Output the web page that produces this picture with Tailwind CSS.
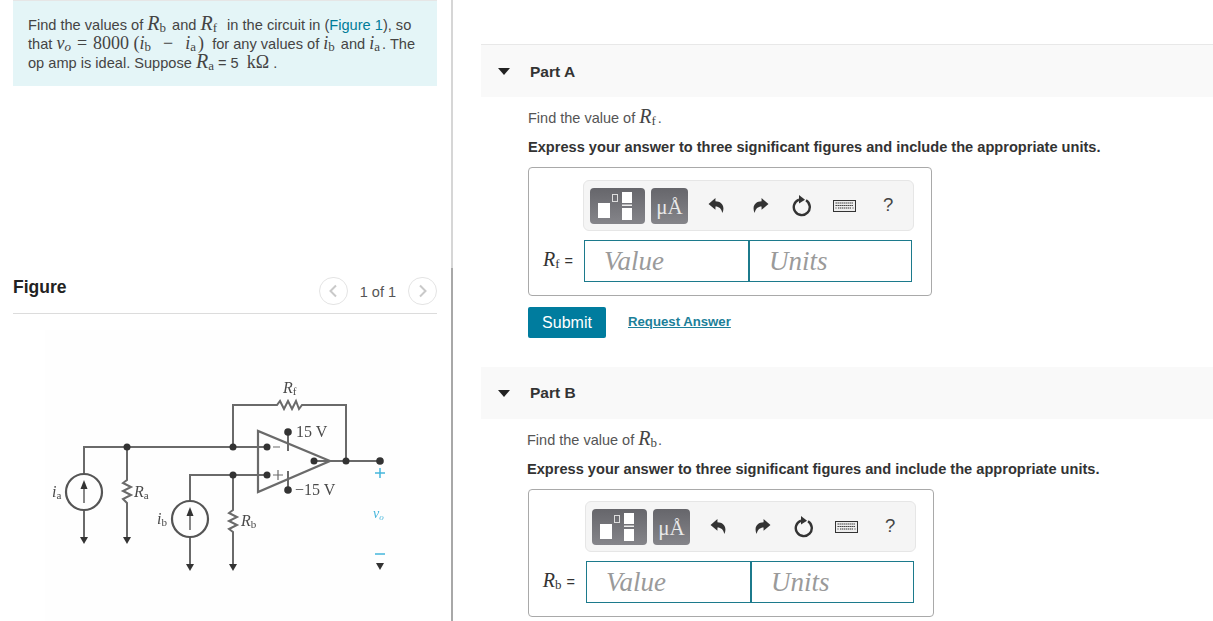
<!DOCTYPE html>
<html lang="en">
<head>
<meta charset="utf-8">
<script src="https://cdn.jsdelivr.net/npm/@tailwindcss/browser@4"></script>
<title>Circuit problem</title>
</head>
<body class="bg-white">
<div class="flex w-[1213px] h-[621px] overflow-hidden bg-white font-['Liberation_Sans',sans-serif] text-[#333]">

  <div class="w-[451px] shrink-0 pl-[13px] pr-[14px] flex flex-col">
    <div class="h-[87px] bg-[#e4f5f7] border-t border-[#e6e6e6] pl-[15px] pt-[15px] text-[14.6px] leading-[19px] text-[#444] whitespace-nowrap">
      <div class="h-[19px]">Find the values of <span class="font-['Liberation_Serif',serif] italic text-[20px] leading-[0]">R<span class="not-italic text-[13px] align-[-2px] leading-[0] mr-[2px]">b</span></span> and <span class="font-['Liberation_Serif',serif] italic text-[20px] leading-[0]">R<span class="not-italic text-[13px] align-[-2px] leading-[0] mr-[2px]">f</span></span> &nbsp;in the circuit in (<span class="text-[#007c99]">Figure 1</span>), so</div>
      <div class="h-[19px]">that <span class="font-['Liberation_Serif',serif] text-[18px] leading-[0]"><i>v<span class="text-[13px] align-[-2px] leading-[0]">o</span></i><span class="mx-[6px]">=</span>8000 (<i>i<span class="not-italic text-[13px] align-[-2px] leading-[0]">b</span></i><span class="mx-[12px]">−</span><i>i<span class="not-italic text-[13px] align-[-2px] leading-[0]">a</span></i><span class="ml-[2px]">)</span></span> &nbsp;for any values of <span class="font-['Liberation_Serif',serif] italic text-[18px] leading-[0]">i<span class="not-italic text-[13px] align-[-2px] leading-[0] mr-[2px]">b</span></span> and <span class="font-['Liberation_Serif',serif] italic text-[18px] leading-[0]">i<span class="not-italic text-[13px] align-[-2px] leading-[0] mr-[2px]">a</span></span>. The</div>
      <div class="h-[19px]">op amp is ideal. Suppose <span class="font-['Liberation_Serif',serif] italic text-[20px] leading-[0]">R<span class="not-italic text-[13px] align-[-2px] leading-[0]">a</span></span> = 5 &nbsp;<span class="font-['Liberation_Serif',serif] text-[18px] leading-[0]">kΩ</span> .</div>
    </div>

    <div class="mt-[190px] h-[37px] flex items-start justify-between border-b border-[#dcdcdc] box-content">
      <div class="text-[17.5px] leading-[22px] font-bold text-[#222]">Figure</div>
      <div class="flex items-center gap-[12px] mt-[1px]">
        <div class="w-[29px] h-[28px] rounded-full border border-[#e4e4e4] flex items-center justify-center">
          <svg width="10" height="14" viewBox="0 0 10 14" fill="none" stroke="#c9c9c9" stroke-width="2"><path d="M8 1.5 L2.5 7 L8 12.5"/></svg>
        </div>
        <div class="text-[14.5px] text-[#555] pt-[3px]">1 of 1</div>
        <div class="w-[29px] h-[28px] rounded-full border border-[#e4e4e4] flex items-center justify-center">
          <svg width="10" height="14" viewBox="0 0 10 14" fill="none" stroke="#c9c9c9" stroke-width="2"><path d="M2 1.5 L7.5 7 L2 12.5"/></svg>
        </div>
      </div>
    </div>

    <div class="mt-[16px] ml-[32px] w-[355px] h-[291px] bg-[#fefefe]">
      <svg width="355" height="291" viewBox="45 330 355 291" class="block blur-[0.35px]" font-family="Liberation Serif, serif" fill="#4a4a4a">
        <g fill="none" stroke="#6a6a6a" stroke-width="2">
          <path d="M84 538 V510 M84 474 V447 H267"/>
          <path d="M127 447 V480 L123 483 L131 487 L123 491 L131 495 L123 499 L127 503 V538"/>
          <path d="M190 565 V537 M190 501 V475 H267"/>
          <path d="M233 475 V510 L229 513 L237 517 L229 521 L237 525 L229 529 L233 532 V565"/>
          <path d="M233 447 V405 H277 L280 401 L284 409 L288 401 L292 409 L296 401 L299 409 L302 405 H346 V461"/>
          <path d="M314 461 H380"/>
          <path d="M288 432 V451 M288 471 V490"/>
          <path d="M258 431 V492 L330 461 Z" stroke-width="2.2"/>
          <circle cx="84" cy="492" r="18" stroke="#555" stroke-width="2.2"/>
          <circle cx="190" cy="519" r="18" stroke="#555" stroke-width="2.2"/>
          <path d="M84 503 V486 M190 530 V513" stroke-width="1.6"/>
          <path d="M273 475 H283 M278 470 V480 M273 447 H280" stroke-width="1.2"/>
        </g>
        <g fill="#333">
          <path d="M84 480 L80.5 489 H87.5 Z"/><path d="M190 507 L186.5 516 H193.5 Z"/>
          <path d="M80 537 H88 L84 544 Z"/><path d="M123 537 H131 L127 544 Z"/><path d="M186 564 H194 L190 571 Z"/><path d="M229 564 H237 L233 571 Z"/><path d="M376 563 H384 L380 570 Z"/>
          <circle cx="127" cy="447" r="3.5"/><circle cx="233" cy="447" r="3.5"/><circle cx="233" cy="475" r="3.5"/><circle cx="267" cy="447" r="3.5"/><circle cx="267" cy="475" r="3.5"/><circle cx="314" cy="461" r="3.5"/><circle cx="346" cy="461" r="3.5"/><circle cx="380" cy="461" r="3.8"/><circle cx="288" cy="432" r="3.8"/><circle cx="288" cy="490" r="3.8"/>
        </g>
        <g font-size="16">
          <text x="52" y="497" font-style="italic">i<tspan font-size="11" font-style="normal" dy="2">a</tspan></text>
          <text x="157" y="524" font-style="italic">i<tspan font-size="11" font-style="normal" dy="2">b</tspan></text>
          <text x="134" y="497" font-style="italic">R<tspan font-size="11" font-style="normal" dy="2">a</tspan></text>
          <text x="241" y="526" font-style="italic">R<tspan font-size="11" font-style="normal" dy="2">b</tspan></text>
          <text x="283" y="393" font-style="italic">R<tspan font-size="11" font-style="normal" dy="2">f</tspan></text>
          <text x="296" y="437">15 V</text>
          <text x="295" y="495">−15 V</text>
        </g>
        <g fill="#45b6dc">
          <text x="373" y="518" font-size="14" font-style="italic">v<tspan font-size="9" dy="2">o</tspan></text>
          <path d="M375 473 H385 M380 468 V478 M375 554 H385" stroke="#45b6dc" stroke-width="1.5" fill="none"/>
        </g>
      </svg>
    </div>
  </div>

  <div class="w-[2px] shrink-0 flex flex-col">
    <div class="h-[268px] bg-[#d6d6d6]"></div>
    <div class="flex-1 bg-[#a8a8a8]"></div>
  </div>

  <div class="flex-1 pl-[28px] pt-[44px]">
    <!-- Part A -->
    <div class="h-[53px] bg-[#f9f9f9] border-t border-[#e8e8e8] flex items-center">
      <svg width="12" height="7" viewBox="0 0 12 7" class="ml-[17px]"><path d="M0 0 H12 L6 7 Z" fill="#222"/></svg>
      <div class="ml-[20px] text-[15.5px] font-bold text-[#333] pt-[1px]">Part A</div>
    </div>
    <div class="pl-[47px]">
      <div class="mt-[12px] h-[19px] text-[14.5px] leading-[19px] text-[#555]">Find the value of <span class="font-['Liberation_Serif',serif] italic text-[20px] leading-[0] text-[#444]">R<span class="not-italic text-[13px] align-[-2px] leading-[0] mr-[2px]">f</span></span>.</div>
      <div class="mt-[10px] h-[19px] text-[14.6px] leading-[19px] font-bold text-[#333] whitespace-nowrap">Express your answer to three significant figures and include the appropriate units.</div>
      <div class="mt-[10px] w-[404px] h-[129px] border border-[#a9a9a9] rounded-[4px] pt-[12px]">
        <div class="ml-[54px] w-[331px] h-[51px] bg-[#f5f5f5] border border-[#e6e6e6] rounded-[6px] flex items-center pl-[6px]">
          <div class="w-[55px] h-[36px] rounded-[4px] bg-linear-to-b from-[#66666b] to-[#85858a] flex items-center justify-center">
            <svg width="55" height="36" viewBox="0 0 55 36"><rect x="8" y="15" width="12" height="15" fill="#fff"/><rect x="22.5" y="6.5" width="5" height="7" fill="none" stroke="#ddd"/><rect x="32" y="4" width="10" height="11" fill="#fff"/><rect x="32" y="16.5" width="10" height="1.5" fill="#eee"/><rect x="32" y="20" width="10" height="12" fill="#fff"/></svg>
          </div>
          <div class="ml-[6px] w-[37px] h-[36px] rounded-[4px] bg-linear-to-b from-[#66666b] to-[#85858a] flex items-center justify-center font-['Liberation_Serif',serif] text-[#e8e8e8] text-[21px] pt-[4px]">μÅ</div>
          <svg class="ml-[20px]" width="17" height="17" viewBox="0 0 16 16"><path d="M0.5 6.5 L7 1 V4 C12.5 4 16.5 8.5 13.5 15 C12.5 11 10.5 9 7 9 V12 Z" fill="#333"/></svg>
          <svg class="ml-[27px]" width="17" height="17" viewBox="0 0 16 16"><path d="M15.5 6.5 L9 1 V4 C3.5 4 -0.5 8.5 2.5 15 C3.5 11 5.5 9 9 9 V12 Z" fill="#333"/></svg>
          <svg class="ml-[23px]" width="20" height="22" viewBox="0 0 20 22"><path d="M14 5.3 A8 8 0 1 1 7 4.6" fill="none" stroke="#333" stroke-width="2.4"/><path d="M7 0 L13 4.8 L7 8.5 Z" fill="#333"/></svg>
          <svg class="ml-[21px]" width="23" height="12" viewBox="0 0 23 12"><rect x="0.5" y="0.5" width="22" height="11" fill="#eee" stroke="#333"/><path d="M2.5 3 H20.5 M2.5 5.5 H20.5 M2.5 8 H3.5 M5 8 H18 M19.5 8 H20.5" stroke="#333" stroke-dasharray="1.4 0.6"/></svg>
          <div class="ml-[27px] text-[18.5px] text-[#444] leading-none">?</div>
        </div>
        <div class="mt-[9px] flex items-center h-[42px]">
          <div class="w-[44px] text-right text-[14.5px] text-[#333] whitespace-nowrap pt-[2px]"><span class="font-['Liberation_Serif',serif] italic text-[20px] leading-[0]">R<span class="not-italic text-[13px] align-[-2px] leading-[0] mr-[1px]">f</span></span> =</div>
          <div class="ml-[11px] w-[165px] h-[42px] border border-[#1c7a8c] pl-[19px] font-['Liberation_Serif',serif] italic text-[27px] leading-[40px] text-[#9a9a9a]">Value</div>
          <div class="w-[163px] h-[42px] border border-[#1c7a8c] pl-[19px] font-['Liberation_Serif',serif] italic text-[27px] leading-[40px] text-[#9a9a9a]">Units</div>
        </div>
      </div>
      <div class="mt-[11px] flex items-center h-[31px]">
        <div class="w-[78px] h-[31px] bg-[#007c9e] rounded-[2px] text-white text-[16px] leading-[31px] text-center">Submit</div>
        <div class="ml-[22px] -mt-[2px] text-[13.2px] font-bold text-[#1c7f99] underline">Request Answer</div>
      </div>
    </div>

    <!-- Part B -->
    <div class="mt-[29px] h-[52px] bg-[#f9f9f9] flex items-center">
      <svg width="12" height="7" viewBox="0 0 12 7" class="ml-[17px]"><path d="M0 0 H12 L6 7 Z" fill="#222"/></svg>
      <div class="ml-[20px] text-[15.5px] font-bold text-[#333] pt-0">Part B</div>
    </div>
    <div class="pl-[46px]">
      <div class="mt-[12px] h-[19px] text-[14.5px] leading-[19px] text-[#555]">Find the value of <span class="font-['Liberation_Serif',serif] italic text-[20px] leading-[0] text-[#444]">R<span class="not-italic text-[13px] align-[-2px] leading-[0] mr-[1px]">b</span></span>.</div>
      <div class="mt-[10px] h-[19px] text-[14.6px] leading-[19px] font-bold text-[#333] whitespace-nowrap">Express your answer to three significant figures and include the appropriate units.</div>
      <div class="mt-[10px] ml-[1px] w-[406px] h-[128px] border border-[#a9a9a9] rounded-[4px] pt-[11px]">
        <div class="ml-[56px] w-[331px] h-[51px] bg-[#f5f5f5] border border-[#e6e6e6] rounded-[6px] flex items-center pl-[6px]">
          <div class="w-[55px] h-[36px] rounded-[4px] bg-linear-to-b from-[#66666b] to-[#85858a] flex items-center justify-center">
            <svg width="55" height="36" viewBox="0 0 55 36"><rect x="8" y="15" width="12" height="15" fill="#fff"/><rect x="22.5" y="6.5" width="5" height="7" fill="none" stroke="#ddd"/><rect x="32" y="4" width="10" height="11" fill="#fff"/><rect x="32" y="16.5" width="10" height="1.5" fill="#eee"/><rect x="32" y="20" width="10" height="12" fill="#fff"/></svg>
          </div>
          <div class="ml-[6px] w-[37px] h-[36px] rounded-[4px] bg-linear-to-b from-[#66666b] to-[#85858a] flex items-center justify-center font-['Liberation_Serif',serif] text-[#e8e8e8] text-[21px] pt-[4px]">μÅ</div>
          <svg class="ml-[20px]" width="17" height="17" viewBox="0 0 16 16"><path d="M0.5 6.5 L7 1 V4 C12.5 4 16.5 8.5 13.5 15 C12.5 11 10.5 9 7 9 V12 Z" fill="#333"/></svg>
          <svg class="ml-[27px]" width="17" height="17" viewBox="0 0 16 16"><path d="M15.5 6.5 L9 1 V4 C3.5 4 -0.5 8.5 2.5 15 C3.5 11 5.5 9 9 9 V12 Z" fill="#333"/></svg>
          <svg class="ml-[23px]" width="20" height="22" viewBox="0 0 20 22"><path d="M14 5.3 A8 8 0 1 1 7 4.6" fill="none" stroke="#333" stroke-width="2.4"/><path d="M7 0 L13 4.8 L7 8.5 Z" fill="#333"/></svg>
          <svg class="ml-[21px]" width="23" height="12" viewBox="0 0 23 12"><rect x="0.5" y="0.5" width="22" height="11" fill="#eee" stroke="#333"/><path d="M2.5 3 H20.5 M2.5 5.5 H20.5 M2.5 8 H3.5 M5 8 H18 M19.5 8 H20.5" stroke="#333" stroke-dasharray="1.4 0.6"/></svg>
          <div class="ml-[27px] text-[18.5px] text-[#444] leading-none">?</div>
        </div>
        <div class="mt-[9px] flex items-center h-[42px]">
          <div class="w-[46px] text-right text-[14.5px] text-[#333] whitespace-nowrap pt-[2px]"><span class="font-['Liberation_Serif',serif] italic text-[20px] leading-[0]">R<span class="not-italic text-[13px] align-[-2px] leading-[0] mr-[1px]">b</span></span> =</div>
          <div class="ml-[11px] w-[165px] h-[42px] border border-[#1c7a8c] pl-[19px] font-['Liberation_Serif',serif] italic text-[27px] leading-[40px] text-[#9a9a9a]">Value</div>
          <div class="w-[163px] h-[42px] border border-[#1c7a8c] pl-[19px] font-['Liberation_Serif',serif] italic text-[27px] leading-[40px] text-[#9a9a9a]">Units</div>
        </div>
      </div>
    </div>
  </div>
</div>
</body>
</html>
